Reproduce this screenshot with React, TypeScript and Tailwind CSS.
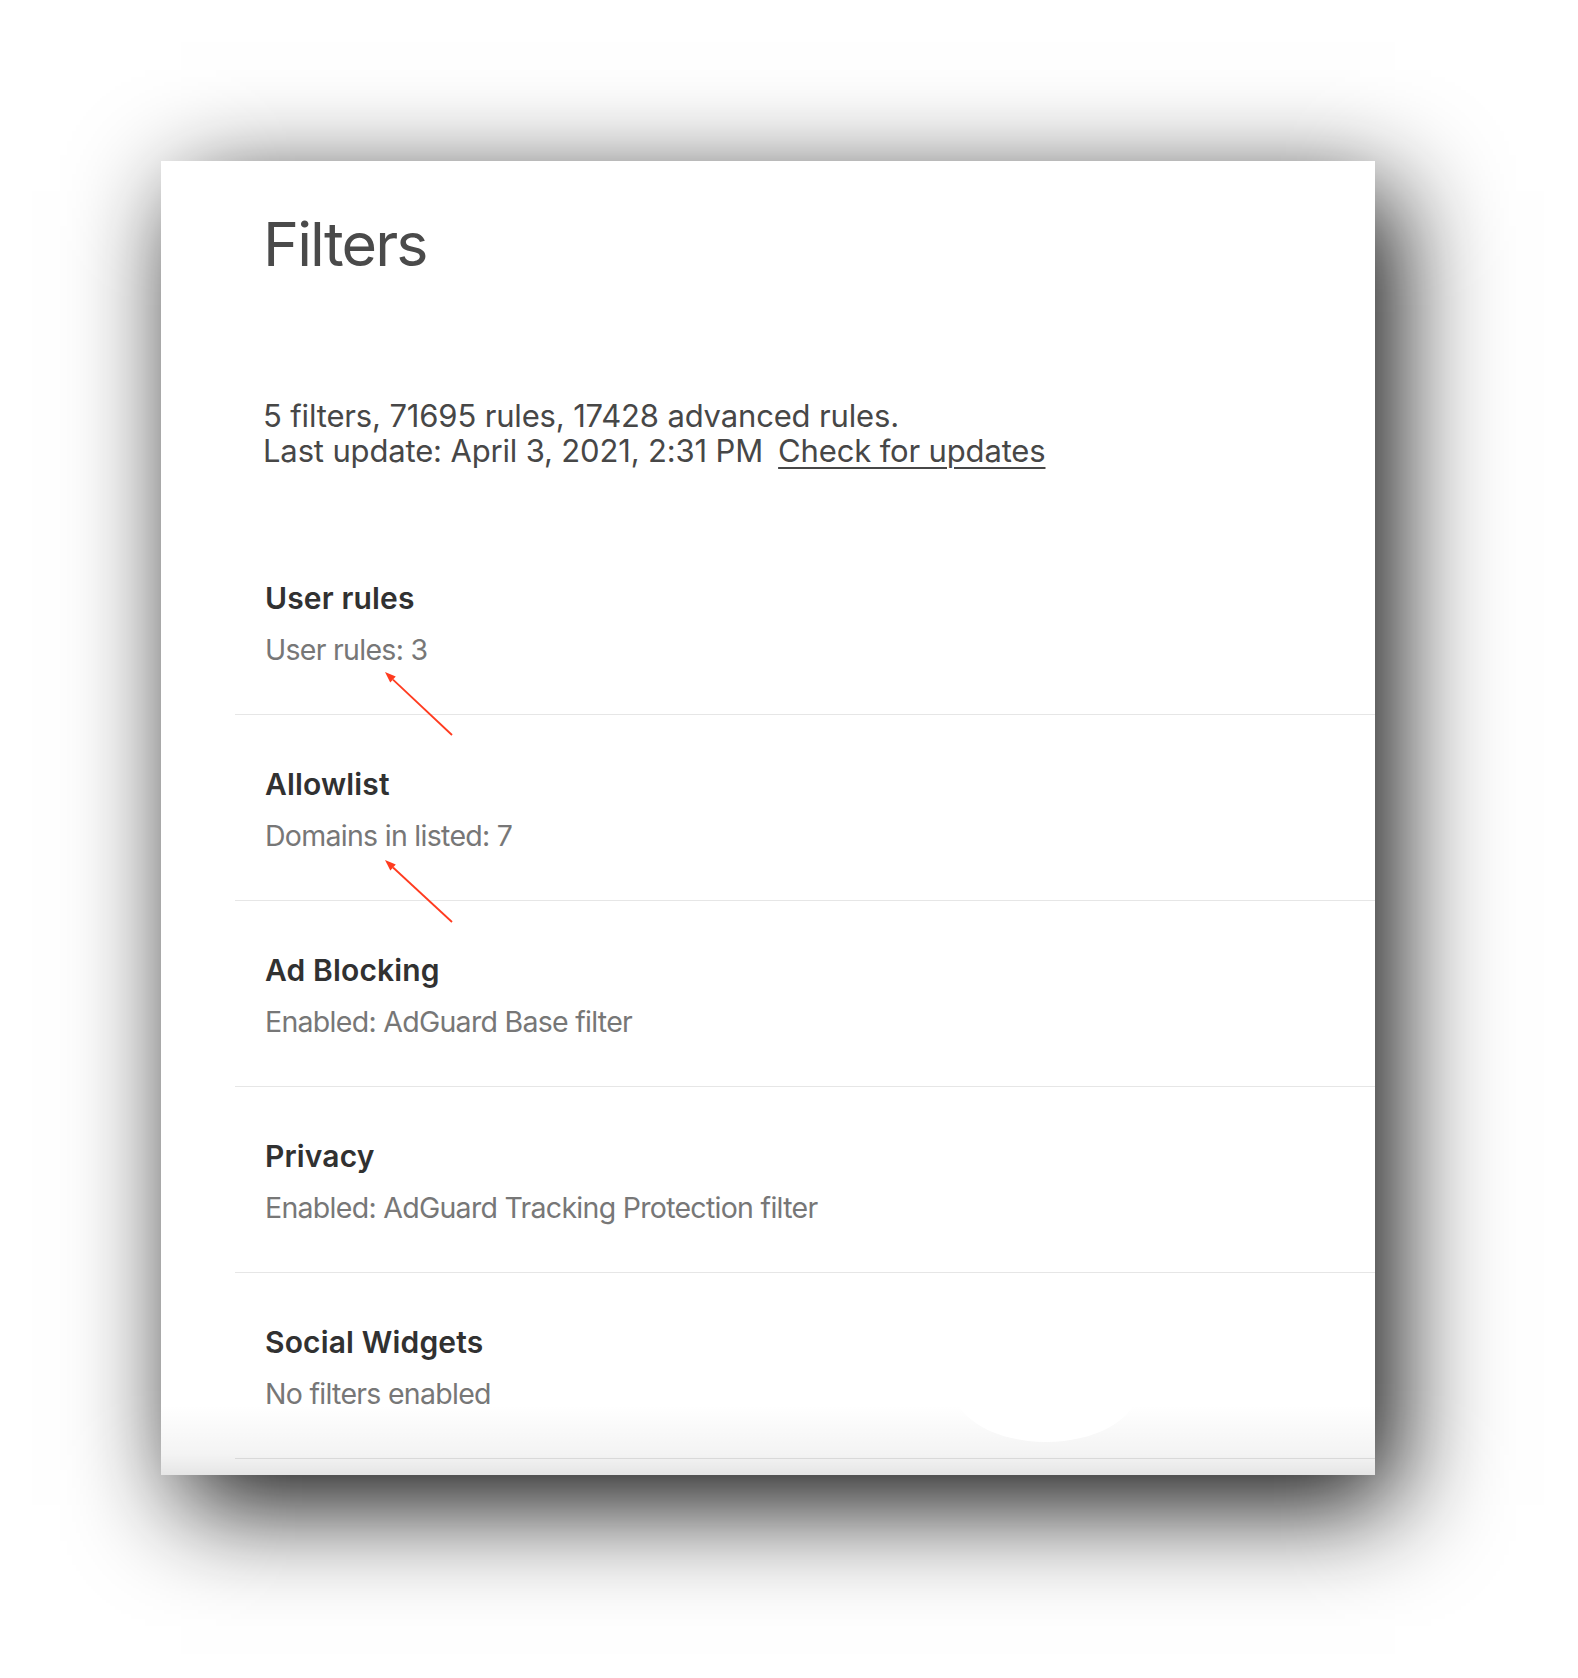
import React from "react";

const rows = [
  { title: "User rules", sub: "User rules: 3" },
  { title: "Allowlist", sub: "Domains in listed: 7" },
  { title: "Ad Blocking", sub: "Enabled: AdGuard Base filter" },
  { title: "Privacy", sub: "Enabled: AdGuard Tracking Protection filter" },
  { title: "Social Widgets", sub: "No filters enabled" },
];

// small red arrow drawn over the screenshot
function Arrow({ x1, y1, x2, y2 }: { x1: number; y1: number; x2: number; y2: number }) {
  const a = Math.atan2(y2 - y1, x2 - x1);
  const len = 11;
  const w = 4;
  const bx = x2 - len * Math.cos(a);
  const by = y2 - len * Math.sin(a);
  const p1 = `${bx + w * Math.sin(a)},${by - w * Math.cos(a)}`;
  const p2 = `${bx - w * Math.sin(a)},${by + w * Math.cos(a)}`;
  return (
    <g>
      <line x1={x1} y1={y1} x2={bx} y2={by} stroke="#ff3b1f" strokeWidth={1.8} />
      <polygon points={`${x2},${y2} ${p1} ${p2}`} fill="#ff3b1f" />
    </g>
  );
}

export default function App() {
  return (
    <main className="relative min-h-[1678px] w-full bg-white font-['Inter','Liberation_Sans',sans-serif] pt-[161px] pl-[161px]">
      {/* Card */}
      <div className="relative h-[1314px] w-[1214px] overflow-hidden bg-white shadow-[20px_30px_100px_rgba(0,0,0,0.95)]">
        <h1 className="pl-[102px] pt-[52px] text-[61px] leading-[62px] font-normal tracking-[-0.03em] text-[#4a4a4a]">
          Filters
        </h1>

        <div className="mt-[123px] pl-[102px] text-[31px] leading-[35px] tracking-[-0.005em] text-[#474747]">
          <div>5 filters, 71695 rules, 17428 advanced rules.</div>
          <div>
            Last update: April 3, 2021, 2:31 PM
            <a className="ml-[15px] underline underline-offset-[5px] decoration-[1.5px]">Check for updates</a>
          </div>
        </div>

        <div className="mt-[61px] pl-[74px]">
          {rows.map((r) => (
            <div key={r.title} className="h-[186px] border-b border-[#e6e6e6] pl-[30px] pt-[51px]">
              <div className="text-[30px] leading-[36px] font-semibold tracking-[0.005em] text-[#313131]">{r.title}</div>
              <div className="mt-[16px] text-[28.5px] leading-[36px] tracking-[-0.025em] text-[#777777]">{r.sub}</div>
            </div>
          ))}
        </div>

        {/* bottom fade */}
        <div className="pointer-events-none absolute bottom-0 left-0 h-[70px] w-full bg-linear-to-b from-transparent via-black/[0.045] via-70% to-black/10" />
        <div className="pointer-events-none absolute bottom-[33px] left-[792px] h-[110px] w-[186px] rounded-[50%] bg-white" />
      </div>

      <svg className="pointer-events-none absolute left-0 top-0" width={1578} height={1678}>
        <Arrow x1={452} y1={735} x2={385} y2={672} />
        <Arrow x1={452} y1={922} x2={385} y2={860} />
      </svg>
    </main>
  );
}
